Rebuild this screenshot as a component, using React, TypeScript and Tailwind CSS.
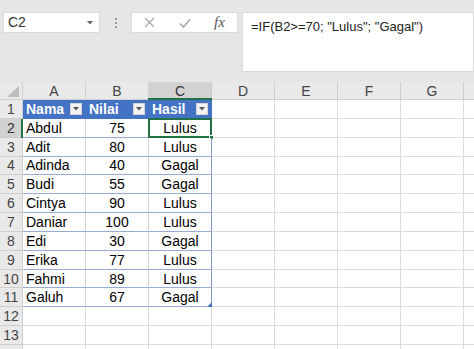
import { ReactNode } from "react";

const rows = [
  { name: "Abdul", nilai: "75", hasil: "Lulus" },
  { name: "Adit", nilai: "80", hasil: "Lulus" },
  { name: "Adinda", nilai: "40", hasil: "Gagal" },
  { name: "Budi", nilai: "55", hasil: "Gagal" },
  { name: "Cintya", nilai: "90", hasil: "Lulus" },
  { name: "Daniar", nilai: "100", hasil: "Lulus" },
  { name: "Edi", nilai: "30", hasil: "Gagal" },
  { name: "Erika", nilai: "77", hasil: "Lulus" },
  { name: "Fahmi", nilai: "89", hasil: "Lulus" },
  { name: "Galuh", nilai: "67", hasil: "Gagal" },
];

// H is only partly in view, so its letter is off screen
const letters = ["A", "B", "C", "D", "E", "F", "G", ""];

const FilterButton = () => (
  <div className="ml-auto mr-[3px] flex h-[12px] w-[12px] items-center justify-center border border-[#d4d4d4] bg-[#f3f3f3]">
    <svg width="6" height="4" viewBox="0 0 6 4">
      <path d="M0 0 L6 0 L3 3.5 Z" fill="#555" />
    </svg>
  </div>
);

const RowHead = ({ n, selected }: { n?: number; selected?: boolean }) => (
  <div
    className={
      selected
        ? "relative flex items-center justify-center border-r border-b border-[#c8c8c8] bg-[#d2d2d2] text-[14px] text-[#333]"
        : "flex items-center justify-center border-r border-b border-[#cfcfcf] bg-[#e9e9e9] text-[14px] text-[#444]"
    }
  >
    {n}
    {selected && <div className="absolute -right-[1px] top-0 -bottom-[1px] w-[2px] bg-[#217346]" />}
  </div>
);

const Empty = () => <div className="border-r border-b border-[#dcdcdc] bg-white" />;

const Row = ({ children }: { children: ReactNode }) => (
  <div className="grid h-[18.85px] grid-cols-[23px_repeat(8,63px)] grid-rows-[18.85px] leading-[16px]">{children}</div>
);

export default function App() {
  return (
    <div className="h-[349px] w-[474px] overflow-hidden bg-[#e6e6e6] font-['Liberation_Sans',Arial,sans-serif]">
      {/* formula bar */}
      <div className="flex h-[82px] items-start pt-[12px]">
        <div className="ml-[3px] flex h-[21px] w-[97px] items-center justify-between border border-[#dadada] bg-white pl-[4px] pr-[6px] text-[14px] text-[#333]">
          <span>C2</span>
          <svg width="6" height="4" viewBox="0 0 6 4">
            <path d="M0 0 L6 0 L3 3.5 Z" fill="#666" />
          </svg>
        </div>
        <div className="flex h-[21px] w-[31px] flex-col items-center justify-center gap-[2px]">
          <span className="h-[2px] w-[2px] bg-[#999]" />
          <span className="h-[2px] w-[2px] bg-[#999]" />
          <span className="h-[2px] w-[2px] bg-[#999]" />
        </div>
        <div className="grid h-[21px] w-[107px] grid-cols-3 items-center border border-[#dadada] bg-white">
          <div className="flex justify-center">
            <svg width="11" height="11" viewBox="0 0 11 11">
              <path d="M1 1 L10 10 M10 1 L1 10" stroke="#a8a8a8" strokeWidth="1.2" />
            </svg>
          </div>
          <div className="flex justify-center">
            <svg width="12" height="10" viewBox="0 0 12 10">
              <path d="M1 5.5 L4.5 9 L11 1.5" stroke="#a8a8a8" strokeWidth="1.6" fill="none" />
            </svg>
          </div>
          <div className="flex justify-center font-['Liberation_Serif',serif] text-[15px] italic leading-none text-[#555]">
            fx
          </div>
        </div>
        <div className="ml-[4px] h-[60px] flex-1 border border-[#dadada] bg-white pl-[8px] pt-[4px] text-[13px] text-[#222]">
          =IF(B2&gt;=70; "Lulus"; "Gagal")
        </div>
      </div>

      {/* column headers */}
      <div className="grid h-[18px] grid-cols-[23px_repeat(8,63px)] grid-rows-[18px] leading-[16px]">
        <div className="relative border-r border-b border-[#cfcfcf] bg-[#e9e9e9]">
          <svg className="absolute bottom-[2px] right-[3px]" width="12" height="11" viewBox="0 0 12 11">
            <path d="M12 0 L12 11 L0 11 Z" fill="#bdbdbd" />
          </svg>
        </div>
        {letters.map((l, i) => (
          <div
            key={i}
            className={
              l === "C"
                ? "relative flex items-center justify-center border-r border-b border-[#c8c8c8] bg-[#d2d2d2] text-[14px] text-[#333]"
                : "flex items-center justify-center border-r border-b border-[#d0d0d0] bg-[#e9e9e9] text-[14px] text-[#444]"
            }
          >
            {l}
            {l === "C" && <div className="absolute -left-[1px] -right-[1px] -bottom-[1px] h-[2px] bg-[#217346]" />}
          </div>
        ))}
      </div>

      {/* row 1: table header */}
      <Row>
        <RowHead n={1} />
        {["Nama", "Nilai", "Hasil"].map((h) => (
          <div key={h} className="flex items-center border-r border-b border-[#4472c4] bg-[#4472c4] pl-[3px] text-[14px] font-bold text-white">
            <span>{h}</span>
            <FilterButton />
          </div>
        ))}
        {letters.slice(3).map((_, k) => (
          <Empty key={k} />
        ))}
      </Row>

      {/* data rows */}
      {rows.map((r, i) => (
        <Row key={r.name}>
          <RowHead n={i + 2} selected={i === 0} />
          <div className="flex items-center border-r border-b border-r-[#d4d4d4] border-b-[#98acd4] bg-white pl-[3px] text-[14px] text-black">
            {r.name}
          </div>
          <div className="flex items-center justify-center border-r border-b border-r-[#d4d4d4] border-b-[#98acd4] bg-white text-[14px] text-black">
            {r.nilai}
          </div>
          <div className="relative flex items-center justify-center border-r border-b border-r-[#8497c2] border-b-[#98acd4] bg-white text-[14px] text-black">
            {r.hasil}
            {i === 0 && (
              <>
                <div className="absolute -top-[1px] -left-[1px] -right-[1px] -bottom-[1px] border-2 border-[#217346]" />
                <div className="absolute -right-[3px] -bottom-[3px] h-[5px] w-[5px] border border-white bg-[#217346]" />
              </>
            )}
            {i === rows.length - 1 && (
              <svg className="absolute -right-[1px] -bottom-[1px]" width="5" height="5" viewBox="0 0 5 5">
                <path d="M5 0 L5 5 L0 5 Z" fill="#4472c4" />
              </svg>
            )}
          </div>
          {letters.slice(3).map((_, k) => (
            <Empty key={k} />
          ))}
        </Row>
      ))}

      {/* empty rows; row 14 only shows its top edge */}
      {[12, 13, undefined].map((n, k) => (
        <Row key={k}>
          <RowHead n={n} />
          {letters.map((_, j) => (
            <Empty key={j} />
          ))}
        </Row>
      ))}
    </div>
  );
}
